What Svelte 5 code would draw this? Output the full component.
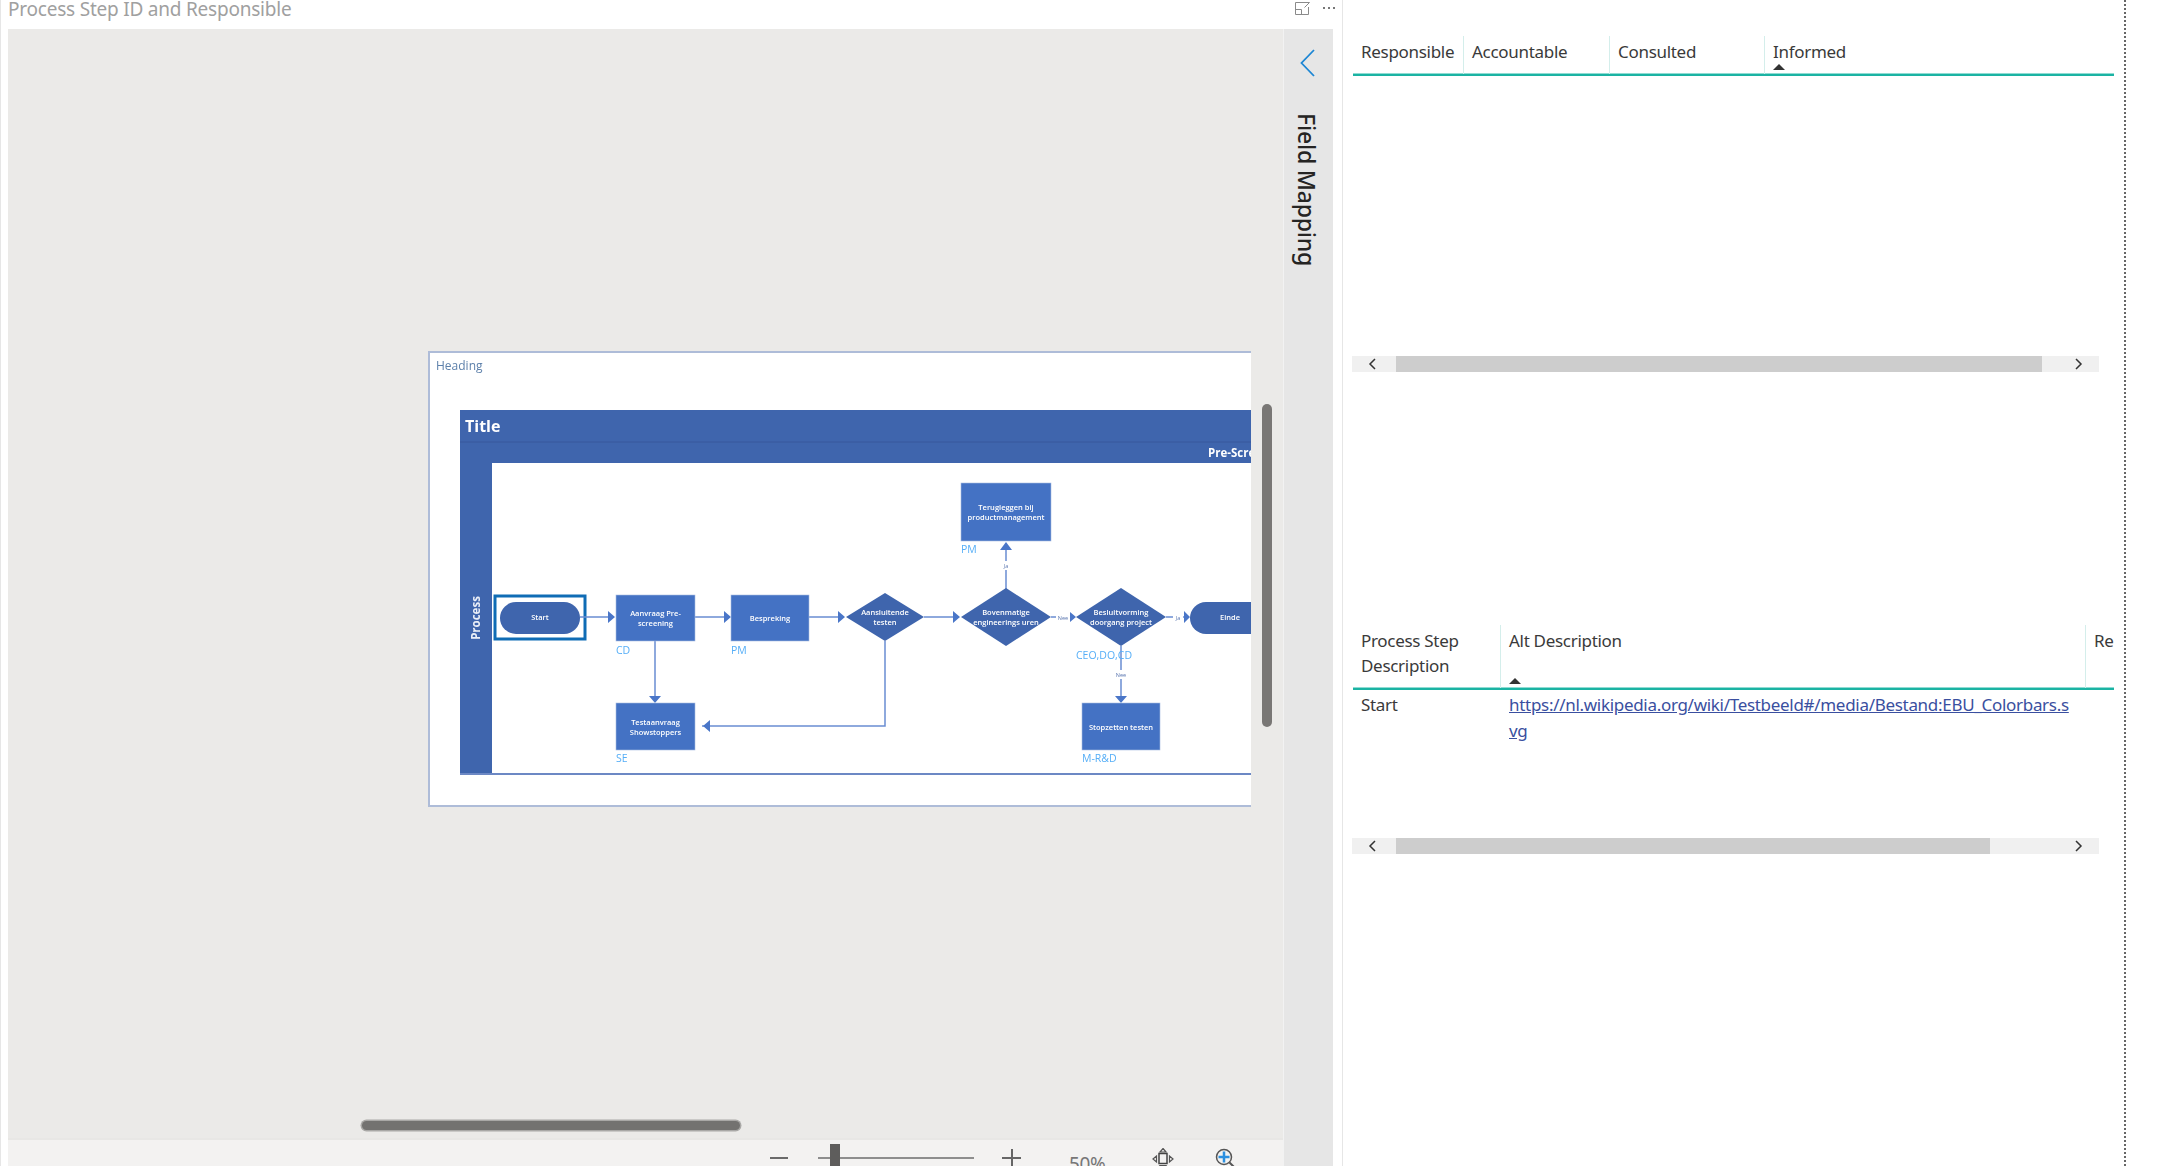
<script>
  const topCols = [
    { label: 'Responsible', w: 111 },
    { label: 'Accountable', w: 146 },
    { label: 'Consulted', w: 155 },
    { label: 'Informed', w: 349, sorted: true }
  ];
  const boxes = [
    { x: 616, y: 596, w: 79, h: 46, lines: ['Aanvraag Pre-', 'screening'] },
    { x: 731, y: 596, w: 78, h: 46, lines: ['Bespreking'] },
    { x: 616, y: 704, w: 79, h: 47, lines: ['Testaanvraag', 'Showstoppers'] },
    { x: 961, y: 484, w: 90, h: 58, lines: ['Terugleggen bij', 'productmanagement'] },
    { x: 1082, y: 704, w: 78, h: 47, lines: ['Stopzetten testen'] }
  ];
  const diamonds = [
    { cx: 885, cy: 618, rx: 39, ry: 24, lines: ['Aansluitende', 'testen'] },
    { cx: 1006, cy: 618, rx: 45, ry: 29, lines: ['Bovenmatige', 'engineerings uren'] },
    { cx: 1121, cy: 618, rx: 45, ry: 29, lines: ['Besluitvorming', 'doorgang project'] }
  ];
  const roles = [
    { x: 616, y: 655, t: 'CD' },
    { x: 731, y: 655, t: 'PM' },
    { x: 616, y: 763, t: 'SE' },
    { x: 961, y: 554, t: 'PM' },
    { x: 1076, y: 660, t: 'CEO,DO,CD' },
    { x: 1082, y: 763, t: 'M-R&D' }
  ];
  const lineY = (cy, n, i) => cy + 3 + (i - (n - 1) / 2) * 10;
</script>

<div class="page">
  <section class="visual">
    <header class="vhead">
      <span class="vtitle">Process Step ID and Responsible</span>
      <svg class="focus" width="15" height="13" viewBox="0 0 15 13" aria-hidden="true">
        <path d="M9 .5H.5v12h13V5M.5 7.5h6v5M9 .5h5.500v0M14.500 .5l-5 5" fill="none" stroke="#8a8a8a" />
      </svg>
      <span class="more"><i></i><i></i><i></i></span>
    </header>
    <div class="vbody">
      <div class="canvas">
        <div class="viewport">
          <div class="image">
            <svg class="flow" width="823" height="456" viewBox="428 352 823 456">
              <rect x="429" y="353" width="840" height="454" fill="#fff" stroke="#aebcd8" stroke-width="2" />
              <text x="436" y="371" class="heading">Heading</text>
              <rect x="460" y="411" width="810" height="53" fill="#3f65ad" />
              <line x1="460" y1="443" x2="1270" y2="443" stroke="#39599c" />
              <text x="465" y="433" class="ttl">Title</text>
              <text x="1208" y="458" class="pre">Pre-Screening</text>
              <rect x="460" y="464" width="32" height="312" fill="#3f65ad" />
              <line x1="460" y1="775" x2="1270" y2="775" stroke="#6c88c4" stroke-width="2" />
              <text transform="translate(480 619) rotate(-90)" text-anchor="middle" class="proc">Process</text>

              <rect x="495" y="597" width="90" height="43" fill="none" stroke="#0f6cb5" stroke-width="3" />
              <rect x="500" y="603" width="80" height="32" rx="16" fill="#3f65ad" />
              <text x="540" y="621" text-anchor="middle" class="lbl">Start</text>
              <rect x="1190" y="603" width="90" height="32" rx="16" fill="#3f65ad" />
              <text x="1230" y="621" text-anchor="middle" class="lbl">Einde</text>

              <g fill="none" stroke="#6a8dd2" stroke-width="1.500">
                <path d="M580 618H610M695 618H726M809 618H840M924 618H956M1051 618H1072M1166 618H1186" />
                <path d="M655 642V700M885 642V727H702M1006 590V547M1121 647V699" />
              </g>
              <g fill="#4a76c8">
                <path d="M608 612l7 6-7 6zM724 612l7 6-7 6zM838 612l7 6-7 6zM953 612l7 6-7 6zM1070 613l6 5-6 5zM1184 612l6 6-6 6z" />
                <path d="M649 697l6 7 6-7zM1115 697l6 7 6-7zM710 721l-7 6 7 6zM1000 551l6-8 6 8z" />
              </g>

              {#each boxes as b}
                <rect x={b.x} y={b.y} width={b.w} height={b.h} fill="#4472c4" stroke="#a9bce2" stroke-width="0.600" />
                {#each b.lines as l, i}
                  <text x={b.x + b.w / 2} y={lineY(b.y + b.h / 2, b.lines.length, i)} text-anchor="middle" class="lbl">{l}</text>
                {/each}
              {/each}
              {#each diamonds as d}
                <polygon points="{d.cx - d.rx},{d.cy} {d.cx},{d.cy - d.ry} {d.cx + d.rx},{d.cy} {d.cx},{d.cy + d.ry}" fill="#3f65ad" />
                {#each d.lines as l, i}
                  <text x={d.cx} y={lineY(d.cy, d.lines.length, i)} text-anchor="middle" class="lbl">{l}</text>
                {/each}
              {/each}
              {#each roles as r}
                <text x={r.x} y={r.y} class="role">{r.t}</text>
              {/each}

              <rect x="1001" y="562" width="10" height="9" fill="#fff" />
              <text x="1006" y="569" text-anchor="middle" class="tiny">Ja</text>
              <rect x="1056" y="614" width="14" height="8" fill="#fff" />
              <text x="1063" y="621" text-anchor="middle" class="tiny">Nee</text>
              <rect x="1173" y="614" width="10" height="8" fill="#fff" />
              <text x="1178" y="621" text-anchor="middle" class="tiny">Ja</text>
              <rect x="1113" y="671" width="16" height="9" fill="#fff" />
              <text x="1121" y="678" text-anchor="middle" class="tiny">Nee</text>
            </svg>
          </div>
          <div class="vscroll"></div>
          <div class="hscroll"></div>
        </div>
        <footer class="toolbar">
          <span class="minus"></span>
          <span class="slider"><span class="thumb"></span></span>
          <span class="plus"></span>
          <span class="pct">50%</span>
          <svg class="fit" width="22" height="26" viewBox="0 0 22 26" aria-hidden="true">
            <path d="M11 .5l3 3.500H8zM1 11l3.500-3v6zM21 11l-3.500-3v6zM11 21l3-3.500H8z" fill="none" stroke="#555" stroke-width="1.200" />
            <rect x="7" y="5.500" width="8" height="10" fill="none" stroke="#444" stroke-width="1.500" />
          </svg>
          <svg class="zoomfit" width="24" height="26" viewBox="0 0 24 26" aria-hidden="true">
            <circle cx="9" cy="9" r="7.500" fill="#f3f2f1" stroke="#555" stroke-width="1.500" />
            <path d="M14.500 14.500l8 8" stroke="#555" stroke-width="2" />
            <path d="M9 3.500v11M3.500 9h11" stroke="#2b8fe0" stroke-width="2.500" />
          </svg>
        </footer>
      </div>
      <aside class="pane">
        <svg class="chev" width="15" height="28" viewBox="0 0 15 28" aria-hidden="true">
          <path d="M14 1L1.500 14 14 27" fill="none" stroke="#1c86d4" stroke-width="1.800" />
        </svg>
        <div class="pane-label">Field Mapping</div>
      </aside>
    </div>
  </section>

  <section class="tables">
    <div class="tvis first">
      <div class="thead">
        {#each topCols as c}
          <div class="th" style="width:{c.w}px">
            <span>{c.label}</span>
            {#if c.sorted}<i class="sort"></i>{/if}
          </div>
        {/each}
      </div>
      <div class="tbody"></div>
      <div class="bar">
        <span class="arrow left">
          <svg width="8" height="12" viewBox="0 0 8 12"><path d="M7 1L2 6l5 5" fill="none" stroke="#333" stroke-width="1.500" /></svg>
        </span>
        <span class="track"><span class="grip a"></span></span>
        <span class="arrow right">
          <svg width="8" height="12" viewBox="0 0 8 12"><path d="M1 1l5 5-5 5" fill="none" stroke="#333" stroke-width="1.500" /></svg>
        </span>
      </div>
    </div>

    <div class="tvis second">
      <div class="thead tall">
        <div class="th w1"><span>Process Step<br />Description</span></div>
        <div class="th w2"><span>Alt Description</span><i class="sort low"></i></div>
        <div class="th w3"><span>Re</span></div>
      </div>
      <div class="row">
        <div class="td w1">Start</div>
        <div class="td w2"><a href="#top">https://nl.wikipedia.org/wiki/Testbeeld#/media/Bestand:EBU_Colorbars.svg</a></div>
      </div>
      <div class="bar">
        <span class="arrow left">
          <svg width="8" height="12" viewBox="0 0 8 12"><path d="M7 1L2 6l5 5" fill="none" stroke="#333" stroke-width="1.500" /></svg>
        </span>
        <span class="track"><span class="grip b"></span></span>
        <span class="arrow right">
          <svg width="8" height="12" viewBox="0 0 8 12"><path d="M1 1l5 5-5 5" fill="none" stroke="#333" stroke-width="1.500" /></svg>
        </span>
      </div>
    </div>
  </section>
  <div class="dots"></div>
</div>

<style>
  :global(body) { margin: 0; background: #fff; }
  .page {
    display: flex;
    width: 2160px;
    height: 1166px;
    overflow: hidden;
    background: #fff;
    font-family: "Noto Sans", "Open Sans", sans-serif;
    color: #333;
    position: relative;
  }
  .visual {
    box-sizing: border-box;
    width: 1343px;
    flex: none;
    padding-left: 7px;
    padding-right: 9px;
    border-left: 1px solid #e6e6e6;
    border-right: 1px solid #e6e6e6;
    display: flex;
    flex-direction: column;
  }
  .vhead {
    height: 29px;
    flex: none;
    display: flex;
    align-items: flex-start;
    position: relative;
  }
  .vtitle {
    font-size: 19px;
    line-height: 19px;
    letter-spacing: -0.22px;
    color: #a0a0a0;
    white-space: nowrap;
  }
  .focus { position: absolute; left: 1287px; top: 2px; }
  .more { position: absolute; left: 1315px; top: 7px; display: flex; gap: 3px; }
  .more i { width: 2px; height: 2px; background: #777; display: block; }
  .vbody { flex: 1; display: flex; min-height: 0; }
  .canvas { width: 1275px; flex: none; display: flex; flex-direction: column; min-height: 0; overflow: hidden; }
  .viewport {
    height: 1109px;
    flex: none;
    position: relative;
    background: #ebeae8;
    box-sizing: border-box;
    padding: 322px 0 0 420px;
  }
  .image { width: 823px; height: 456px; overflow: hidden; }
  .flow { display: block; filter: blur(0.7px); font-family: "Open Sans", "Noto Sans", sans-serif; }
  .heading { font-size: 12px; fill: #5d80ab; }
  .ttl { font-size: 16px; font-weight: 700; fill: #fff; }
  .pre { font-size: 11.500px; font-weight: 700; fill: #fff; }
  .proc { font-size: 11.500px; font-weight: 700; fill: #eaeef7; }
  .lbl { font-size: 7.500px; font-weight: 600; fill: #fff; }
  .role { font-size: 10.500px; fill: #55aef7; }
  .tiny { font-size: 5.500px; fill: #5a76b0; }
  .vscroll {
    position: absolute;
    left: 1254px;
    top: 375px;
    width: 10px;
    height: 323px;
    border-radius: 5px;
    background: #797775;
  }
  .hscroll {
    position: absolute;
    left: 354px;
    top: 1092px;
    width: 378px;
    height: 9px;
    border-radius: 5px;
    background: #737270;
    box-shadow: 0 0 0 1.500px #a9a8a6;
  }
  .toolbar {
    height: 38px;
    flex: none;
    box-sizing: border-box;
    background: #f3f2f1;
    border-top: 2px solid #e8e7e5;
    display: flex;
    align-items: center;
    padding-left: 762px;
  }
  .minus { width: 18px; height: 2px; background: #6a6a6a; }
  .slider { margin-left: 30px; width: 156px; height: 2px; background: #8e8e8e; position: relative; }
  .thumb { position: absolute; left: 12px; top: -13px; width: 10px; height: 26px; background: #5e5d5c; }
  .plus {
    margin-left: 28px;
    width: 19px;
    height: 19px;
    background:
      linear-gradient(#666, #666) center / 19px 2px no-repeat,
      linear-gradient(#666, #666) center / 2px 19px no-repeat;
  }
  .pct { margin-left: 48px; width: 40px; font-size: 19px; letter-spacing: -0.4px; color: #777; position: relative; top: 6px; }
  .fit { margin-left: 43px; flex: none; position: relative; top: 3px; }
  .zoomfit { margin-left: 41px; flex: none; position: relative; top: 3px; }
  .pane {
    width: 50px;
    flex: none;
    background: #e6e6e6;
    border-left: 1px solid #f2f2f2;
    box-sizing: border-box;
    display: flex;
    flex-direction: column;
    align-items: center;
    padding-top: 20px;
    min-height: 0;
  }
  .chev { flex: none; margin-left: -3px; }
  .pane-label {
    margin-top: 36px;
    margin-left: -3px;
    writing-mode: vertical-rl;
    font-size: 23px;
    font-weight: 500;
    line-height: 26px;
    letter-spacing: -0.2px;
    color: #252423;
    white-space: nowrap;
  }

  .tables { width: 781px; flex: none; box-sizing: border-box; padding: 36px 0 0 10px; display: flex; flex-direction: column; }
  .tvis { width: 761px; }
  .first { height: 589px; }
  .thead {
    display: flex;
    height: 38px;
    border-bottom: 2px solid #1bb3a3;
    box-shadow: inset 0 -1px 0 #8fdcd3;
    box-sizing: content-box;
    overflow: hidden;
  }
  .th {
    flex: none;
    box-sizing: border-box;
    padding: 3px 0 0 8px;
    font-size: 17px;
    line-height: 25px;
    letter-spacing: -0.3px;
    color: #3a3a3a;
    border-right: 1px solid #d4eeeb;
    white-space: nowrap;
    position: relative;
  }
  .th:last-child { border-right: none; }
  .sort {
    position: absolute;
    left: 8px;
    bottom: 4px;
    width: 0;
    height: 0;
    border-left: 6px solid transparent;
    border-right: 6px solid transparent;
    border-bottom: 6px solid #333;
  }
  .tbody { height: 280px; }
  .bar {
    margin-left: -1px;
    width: 747px;
    height: 16px;
    display: flex;
    background: #f0f0f0;
  }
  .arrow { width: 44px; flex: none; display: flex; align-items: center; justify-content: center; box-sizing: border-box; }
  .arrow.left { padding-right: 5px; }
  .arrow.right { padding-left: 3px; }
  .track { flex: 1; display: block; position: relative; }
  .grip { display: block; height: 16px; background: #cdcdcd; }
  .grip.a { width: 646px; }
  .grip.b { width: 594px; }

  .thead.tall { height: 63px; }
  .w1 { width: 148px; }
  .w2 { width: 585px; }
  .w3 { width: 28px; }
  .tall .th { padding-top: 3px; }
  .low { bottom: 4px; left: 8px; }
  .row { display: flex; height: 148px; }
  .td {
    flex: none;
    box-sizing: border-box;
    padding: 2px 14px 0 8px;
    font-size: 17px;
    line-height: 26px;
    letter-spacing: -0.3px;
    color: #3a3a3a;
    word-break: break-all;
  }
  .td a { color: #3a4fa0; text-decoration: underline; }
  .dots {
    position: absolute;
    left: 2124px;
    top: 0;
    width: 2px;
    height: 1166px;
    background: repeating-linear-gradient(#666 0 2px, transparent 2px 4px);
  }
</style>
